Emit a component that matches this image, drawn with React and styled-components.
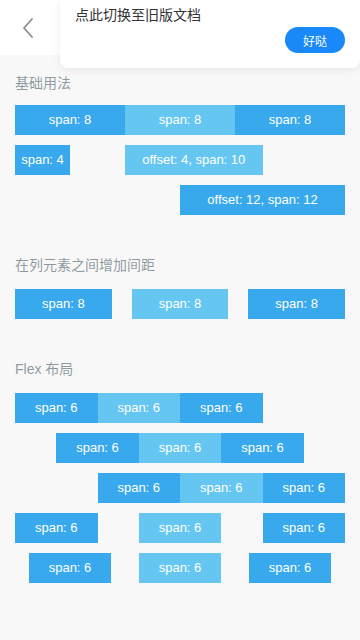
import React from 'react';
import styled, { createGlobalStyle } from 'styled-components';

const GlobalStyle = createGlobalStyle`
  html, body {
    margin: 0;
    padding: 0;
    background: #f8f8f8;
    font-family: "Liberation Sans", Arial, "Noto Sans CJK SC", sans-serif;
  }
  * { box-sizing: border-box; }
`;

const Page = styled.div`
  position: relative;
  width: 360px;
  min-height: 640px;
  background: #f8f8f8;
`;

const Header = styled.header`
  height: 55px;
  background: #fff;
  display: flex;
  align-items: center;
  padding-left: 18px;
`;

const BackButton = styled.button`
  border: 0;
  background: none;
  padding: 0;
  width: 20px;
  height: 24px;
  display: flex;
  align-items: center;
  justify-content: center;
  cursor: pointer;
`;

const Notice = styled.div`
  position: absolute;
  top: 0;
  right: 0;
  width: 300px;
  height: 68px;
  background: #fff;
  border-radius: 0 0 8px 8px;
  box-shadow: 0 2px 8px rgba(0, 0, 0, 0.07);
  padding: 5px 15px 0 15px;
  display: flex;
  flex-direction: column;
`;

const NoticeText = styled.div`
  font-size: 14px;
  line-height: 20px;
  color: #323233;
`;

const NoticeButton = styled.button`
  align-self: flex-end;
  margin-top: 2px;
  width: 60px;
  height: 26px;
  border: 0;
  border-radius: 13px;
  background: #1989fa;
  color: #fff;
  font-size: 12px;
  font-family: inherit;
  cursor: pointer;
`;

const Title = styled.h2`
  margin: 0;
  padding: ${p => (p.first ? '20px 15px 14px' : '32px 15px 16px')};
  font-size: 14px;
  line-height: 16px;
  font-weight: normal;
  color: rgba(69, 90, 100, 0.6);
`;

const Block = styled.section`
  padding: 0 15px;
`;

const Row = styled.div`
  display: flex;
  flex-wrap: wrap;
  justify-content: ${p => p.justify || 'flex-start'};
  margin: ${p => (p.gutter ? `0 -${p.gutter / 2}px` : '0')};
`;

const Col = styled.div`
  flex: 0 0 auto;
  width: ${p => (p.span / 24) * 100}%;
  margin-left: ${p => ((p.offset || 0) / 24) * 100}%;
  margin-bottom: 10px;
  padding: ${p => (p.gutter ? `0 ${p.gutter / 2}px` : '0')};
  background-clip: content-box;
  background-color: ${p => (p.light ? '#66c6f2' : '#39a9ed')};
  color: #fff;
  font-size: 13px;
  line-height: 30px;
  text-align: center;
  white-space: nowrap;
`;

const BackIcon = () => (
  <svg width="14" height="22" viewBox="0 0 14 22" fill="none">
    <path d="M11 2 L3 11 L11 20" stroke="#8a8f94" strokeWidth="1.8" strokeLinecap="round" strokeLinejoin="round" />
  </svg>
);

const flexRows = ['flex-start', 'center', 'flex-end', 'space-between', 'space-around'];

const App = () => (
  <Page>
    <GlobalStyle />
    <Header>
      <BackButton aria-label="back">
        <BackIcon />
      </BackButton>
    </Header>

    <Title first>基础用法</Title>
    <Block>
      <Row>
        <Col span={8}>span: 8</Col>
        <Col span={8} light>span: 8</Col>
        <Col span={8}>span: 8</Col>
      </Row>
      <Row>
        <Col span={4}>span: 4</Col>
        <Col span={10} offset={4} light>offset: 4, span: 10</Col>
      </Row>
      <Row>
        <Col span={12} offset={12}>offset: 12, span: 12</Col>
      </Row>
    </Block>

    <Title>在列元素之间增加间距</Title>
    <Block>
      <Row gutter={20}>
        <Col span={8} gutter={20}>span: 8</Col>
        <Col span={8} gutter={20} light>span: 8</Col>
        <Col span={8} gutter={20}>span: 8</Col>
      </Row>
    </Block>

    <Title>Flex 布局</Title>
    <Block>
      {flexRows.map(j => (
        <Row key={j} justify={j}>
          <Col span={6}>span: 6</Col>
          <Col span={6} light>span: 6</Col>
          <Col span={6}>span: 6</Col>
        </Row>
      ))}
    </Block>

    <Notice>
      <NoticeText>点此切换至旧版文档</NoticeText>
      <NoticeButton>好哒</NoticeButton>
    </Notice>
  </Page>
);

export default App;
